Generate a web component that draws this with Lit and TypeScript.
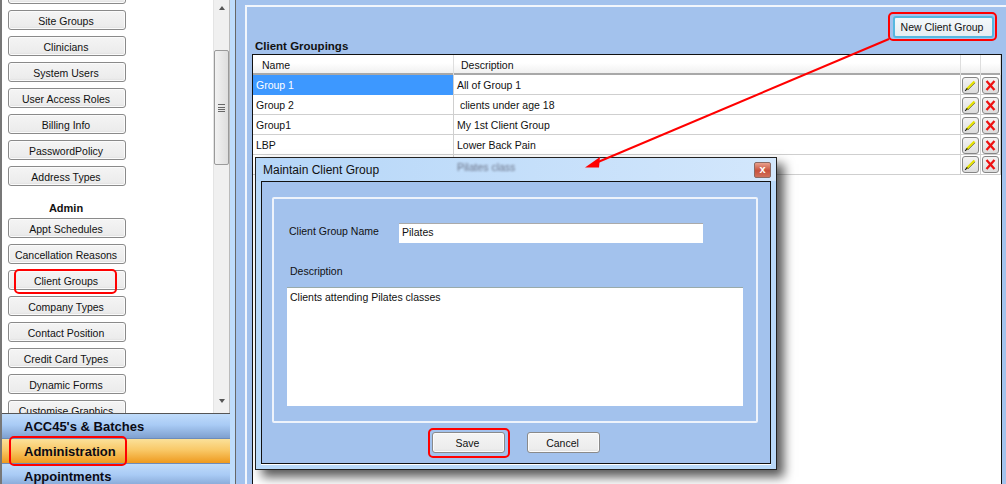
import { LitElement, html, css, svg } from "lit";
import { customElement } from "lit/decorators.js";

const setupBtns = ["", "Site Groups", "Clinicians", "System Users", "User Access Roles", "Billing Info", "PasswordPolicy", "Address Types"];
const adminBtns = ["Appt Schedules", "Cancellation Reasons", "Client Groups", "Company Types", "Contact Position", "Credit Card Types", "Dynamic Forms", "Customise Graphics"];
const rows = [
  ["Group 1", "All of Group 1"],
  ["Group 2", "\u00a0clients under age 18"],
  ["Group1", "My 1st Client Group"],
  ["LBP", "Lower Back Pain"],
  ["", ""],
];

@customElement("app-root")
export class AppRoot extends LitElement {
  static styles = css`
    :host { display: block; position: relative; width: 1006px; height: 484px; overflow: hidden; font-family: "Liberation Sans", Arial, sans-serif; font-size: 10.5px; color: #111; background: #a3c2ed; }
    * { box-sizing: border-box; }
    .app { display: flex; height: 484px; }
    .side { width: 230px; flex: none; display: flex; flex-direction: column; border-left: 2px solid #777; background: #fff; overflow: hidden; }
    .sideTop { flex: none; height: 414px; display: flex; overflow: hidden; border-bottom: 1px solid #555; }
    .list { flex: 1; min-width: 0; display: flex; flex-direction: column; gap: 6px; padding-left: 6px; margin-top: -16px; overflow: hidden; }
    .btn { flex: none; height: 20px; width: 118px; padding: 1px 2px 0 0; display: flex; align-items: center; justify-content: center; white-space: nowrap; background: linear-gradient(#f4f4f4, #ececec 85%, #dcdcdc); border: 1px solid #8a8a8a; border-radius: 3px; box-shadow: inset 0 0 0 1px #fbfbfb; }
    .admin { height: 20px; width: 118px; flex: none; padding-right: 2px; display: flex; align-items: center; justify-content: center; font-weight: bold; font-size: 11px; margin-top: 6px; margin-bottom: -6px; }
    .scroll { width: 17px; flex: none; background: #f0f0f0; display: flex; flex-direction: column; align-items: center; border-left: 1px solid #e4e4e4; border-right: 1px solid #bbb; }
    .arrowUp { width: 0; height: 0; margin-top: 6px; border: 3px solid transparent; border-top: none; border-bottom: 4px solid #555; }
    .thumb { width: 15px; height: 115px; margin-top: 40px; background: linear-gradient(90deg, #f2f2f2, #dedede); border: 1px solid #9a9a9a; border-radius: 2px; display: flex; align-items: center; justify-content: center; }
    .grip { width: 7px; height: 8px; border-top: 1px solid #666; border-bottom: 1px solid #666; background: linear-gradient(#0000 2px, #666 2px, #666 3px, #0000 3px, #0000 4px, #666 4px, #666 5px, #0000 5px); }
    .arrowDown { width: 0; height: 0; margin-top: auto; margin-bottom: 10px; border: 3px solid transparent; border-bottom: none; border-top: 4px solid #555; }
    .acc { flex: none; height: 25px; display: flex; align-items: center; padding-left: 22px; font-size: 13px; font-weight: bold; color: #0a0a14; background: linear-gradient(#c0dcfb, #a9cbf5 45%, #7fa0cf); border-bottom: 1px solid #6d8cba; }
    .acc.on { background: linear-gradient(#fbe19a, #f9c968 45%, #ee9a1f); }
    .main { flex: 1; min-width: 0; border-left: 5px solid #bfdcfb; background: #a3c2ed; }
    .mainIn { height: 100%; border-left: 1px solid #666; padding: 5px 0 0 9px; }
    .group { height: 100%; border-left: 2px solid #f2f6fc; border-top: 2px solid #f2f6fc; padding: 9px 4px 0 5px; display: flex; flex-direction: column; }
    .top { display: flex; justify-content: flex-end; padding-right: 8px; }
    .newBtn { width: 101px; height: 22px; padding-right: 3px; display: flex; align-items: center; justify-content: center; background: linear-gradient(#f4f8fb, #e6edf2); border: 2px solid #56b8e0; border-radius: 3px; white-space: nowrap; }
    .title { font-weight: bold; font-size: 11.5px; height: 16px; margin-left: 3px; line-height: 16px; }
    .table { flex: 1; background: #fff; border: 1px solid #111; border-bottom: none; }
    .head, .row { display: grid; grid-template-columns: 201px 507px 20px 20px; }
    .head { height: 20px; background: linear-gradient(#fff 45%, #f0f0f0); border-bottom: 2px solid #a8a8a8; }
    .head div { border-right: 1px solid #dedede; line-height: 20px; }
    .pn { padding-left: 9px; }
    .pd { padding-left: 7px; }
    .row { height: 20px; border-bottom: 1px solid #cfcfcf; }
    .cell { border-right: 1px solid #cfcfcf; padding: 0 3px; line-height: 20px; white-space: pre; }
    .cell.sel { background: #3d98ff; color: #fff; }
    .ic { border-right: 1px solid #cfcfcf; display: flex; align-items: center; justify-content: center; }
    .icb { width: 17px; height: 17px; background: linear-gradient(#f4f4f4, #dcdcdc); border: 1px solid #858585; border-radius: 3px; display: block; }
    .dialog { position: absolute; left: 255px; top: 157px; width: 522px; height: 313px; background: #b9d9f9; border: 1px solid #222; box-shadow: 7px 7px 10px rgba(0,0,0,.65); display: flex; flex-direction: column; padding: 0 5px 5px; }
    .tb { height: 23px; flex: none; margin: 0 -5px; padding: 0 5px 0 7px; position: relative; display: flex; align-items: center; font-size: 12px; background: linear-gradient(90deg, #b5d6f8, #d3e7fc); }
    .ghost { position: absolute; left: 201px; top: 3px; font-size: 10.5px; color: #445; filter: blur(1.2px); opacity: .7; }
    .closeX { margin-left: auto; width: 17px; height: 16px; border: 1px solid #8a6a64; border-radius: 2px; background: linear-gradient(#e9a08c, #c8513c 55%, #d0705a); color: #fff; font: bold 11px/13px "Liberation Sans", sans-serif; text-align: center; }
    .body { flex: 1; background: #a3c2ed; border: 1px solid #111; box-shadow: 0 1px 0 #fff; padding: 15px 12px 0 10px; display: flex; flex-direction: column; }
    .fs { height: 226px; flex: none; border: 2px solid #eef3fb; border-radius: 2px; padding: 0 13px; display: flex; flex-direction: column; }
    .nameRow { display: flex; align-items: center; margin-top: 24px; height: 20px; padding-left: 2px; }
    .nameRow span { width: 110px; margin-bottom: 4px; }
    .inp { width: 304px; height: 20px; background: #fff; border-top: 1px solid #aaa; padding: 0 3px; line-height: 17px; }
    .dl { margin: 22px 0 0 3px; height: 15px; }
    .ta { margin: 7px 0 0; width: 456px; height: 119px; background: #fff; border-top: 1px solid #9aa; padding: 3px 3px; }
    .acts { display: flex; gap: 22px; padding: 9px 0 0 160px; }
    .acts .btn { width: 73px; height: 21px; }
    .anno { position: absolute; inset: 0; width: 1006px; height: 484px; pointer-events: none; }
  `;

  private icons() {
    return html`
      <div class="ic"><svg class="icb" viewBox="0 0 17 17"><path d="M4 13 L13 4" stroke="#e4e000" stroke-width="2.6"/><path d="M5.6 13.6 L13.6 5.6" stroke="#55552a" stroke-width=".8"/><path d="M2.5 14.5 L5 12.6 L4.4 12 Z" fill="#111" stroke="#111"/></svg></div>
      <div class="ic"><svg class="icb" viewBox="0 0 17 17"><path d="M4 3.5 L13 13.5 M13 3.5 L4 13.5" stroke="#ee1111" stroke-width="2.6"/></svg></div>`;
  }

  render() {
    return html`
      <div class="app">
        <div class="side">
          <div class="sideTop">
            <div class="list">
              ${setupBtns.map((b) => html`<div class="btn">${b}</div>`)}
              <div class="admin">Admin</div>
              ${adminBtns.map((b) => html`<div class="btn">${b}</div>`)}
            </div>
            <div class="scroll"><div class="arrowUp"></div><div class="thumb"><div class="grip"></div></div><div class="arrowDown"></div></div>
          </div>
          <div class="acc">ACC45's &amp; Batches</div>
          <div class="acc on">Administration</div>
          <div class="acc">Appointments</div>
        </div>
        <div class="main"><div class="mainIn"><div class="group">
          <div class="top"><div class="newBtn">New Client Group</div></div>
          <div class="title">Client Groupings</div>
          <div class="table">
            <div class="head"><div class="pn">Name</div><div class="pd">Description</div><div></div><div></div></div>
            ${rows.map((r, i) => html`<div class="row"><div class="cell ${i === 0 ? "sel" : ""}">${r[0]}</div><div class="cell">${r[1]}</div>${this.icons()}</div>`)}
          </div>
        </div></div></div>
      </div>
      <div class="dialog">
        <div class="tb">Maintain Client Group<span class="ghost">Pilates class</span><div class="closeX">x</div></div>
        <div class="body">
          <div class="fs">
            <div class="nameRow"><span>Client Group Name</span><div class="inp">Pilates</div></div>
            <div class="dl">Description</div>
            <div class="ta">Clients attending Pilates classes</div>
          </div>
          <div class="acts"><div class="btn">Save</div><div class="btn">Cancel</div></div>
        </div>
      </div>
      <svg class="anno" viewBox="0 0 1006 484" fill="none" stroke="#f00" stroke-width="2">
        ${svg`
          <rect x="889" y="13" width="107" height="27" rx="4"/>
          <rect x="15" y="270" width="101" height="23" rx="4"/>
          <rect x="10" y="437" width="116" height="28" rx="4"/>
          <rect x="429" y="429" width="80" height="28" rx="4"/>
          <path d="M889 39 L598 162"/>
          <path d="M585 167.5 L600 157 L599 167.5 Z" fill="#f00" stroke="none"/>
        `}
      </svg>`;
  }
}
